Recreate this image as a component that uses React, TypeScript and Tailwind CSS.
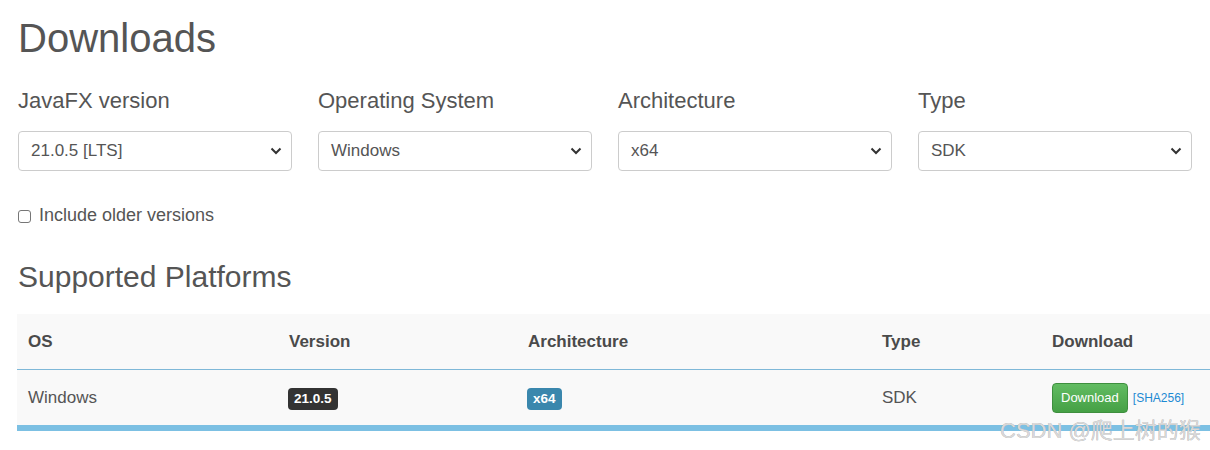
import React from 'react';

const font = { fontFamily: '"Liberation Sans", Arial, sans-serif' };

const Chevron = () => (
    <svg width="12" height="8" viewBox="0 0 12 8" className="absolute right-[9px] top-1/2 -translate-y-1/2">
        <path d="M1.5 1.5 L6 6 L10.5 1.5" fill="none" stroke="#333" strokeWidth="2" />
    </svg>
);

const Field = ({ label, value }: { label: string; value: string }) => (
    <div className="w-[274px]">
        <div className="text-[22px] leading-[24px] text-[#555]">{label}</div>
        <div className="relative mt-[18px] h-[40px] rounded-[4px] border border-[#ccc] bg-white">
            <div className="flex h-full items-center pl-[12px] text-[17px] text-[#555]">{value}</div>
            <Chevron />
        </div>
    </div>
);

const cols = 'grid grid-cols-[261px_239px_354px_170px_1fr]';

export default function App() {
    return (
        <div className="relative h-[450px] w-[1210px] overflow-hidden bg-white" style={font}>
            <div className="pl-[18px] pt-[16px]">
                <h1 className="text-[40px] leading-[44px] text-[#555]">Downloads</h1>

                <div className="mt-[29px] flex gap-[26px]">
                    <Field label="JavaFX version" value="21.0.5 [LTS]" />
                    <Field label="Operating System" value="Windows" />
                    <Field label="Architecture" value="x64" />
                    <Field label="Type" value="SDK" />
                </div>

                <div className="mt-[32px] flex h-[24px] items-center gap-[8px]">
                    <span className="mt-[3px] h-[13px] w-[13px] rounded-[3px] border border-[#767676] bg-white" />
                    <span className="text-[18px] text-[#555]">Include older versions</span>
                </div>

                <h2 className="mt-[33px] text-[30px] leading-[33px] text-[#555]">Supported Platforms</h2>
            </div>

            <div className="ml-[17px] mt-[21px] w-[1193px] bg-[#f9f9f9]">
                <div className={`${cols} h-[56px] items-center border-b border-[#7fb8d8] text-[17px] font-bold text-[#4a4a4a]`}>
                    <div className="pl-[11px]">OS</div>
                    <div className="pl-[11px]">Version</div>
                    <div className="pl-[11px]">Architecture</div>
                    <div className="pl-[11px]">Type</div>
                    <div className="pl-[11px]">Download</div>
                </div>
                <div className={`${cols} h-[55px] items-center text-[17px] text-[#555]`}>
                    <div className="pl-[11px]">Windows</div>
                    <div className="pl-[10px]">
                        <span className="inline-flex h-[22px] items-center rounded-[4px] bg-[#333] px-[6px] text-[13.5px] font-bold text-white">21.0.5</span>
                    </div>
                    <div className="pl-[10px]">
                        <span className="inline-flex h-[22px] items-center rounded-[4px] bg-[#3a87ad] px-[6px] text-[13.5px] font-bold text-white">x64</span>
                    </div>
                    <div className="pl-[11px]">SDK</div>
                    <div className="flex items-center gap-[5px] pl-[11px]">
                        <span className="inline-flex h-[30px] items-center rounded-[4px] border border-[#3e8f3e] bg-gradient-to-b from-[#62bc62] to-[#45a045] px-[8px] text-[13px] text-white">Download</span>
                        <span className="text-[12px] text-[#1d8ad3]">[SHA256]</span>
                    </div>
                </div>
                <div className="h-[6px] bg-[#7cc0e3]" />
            </div>

            <div
                className="absolute left-[1000px] top-[417px] whitespace-nowrap text-[22px] leading-[28px] text-[#d9d9d9]"
                style={{ fontFamily: '"Liberation Sans", "Noto Sans CJK SC", sans-serif', textShadow: '0 0 0.6px #9a9a9a' }}
            >
                CSDN @爬上树的猴
            </div>
        </div>
    );
}
